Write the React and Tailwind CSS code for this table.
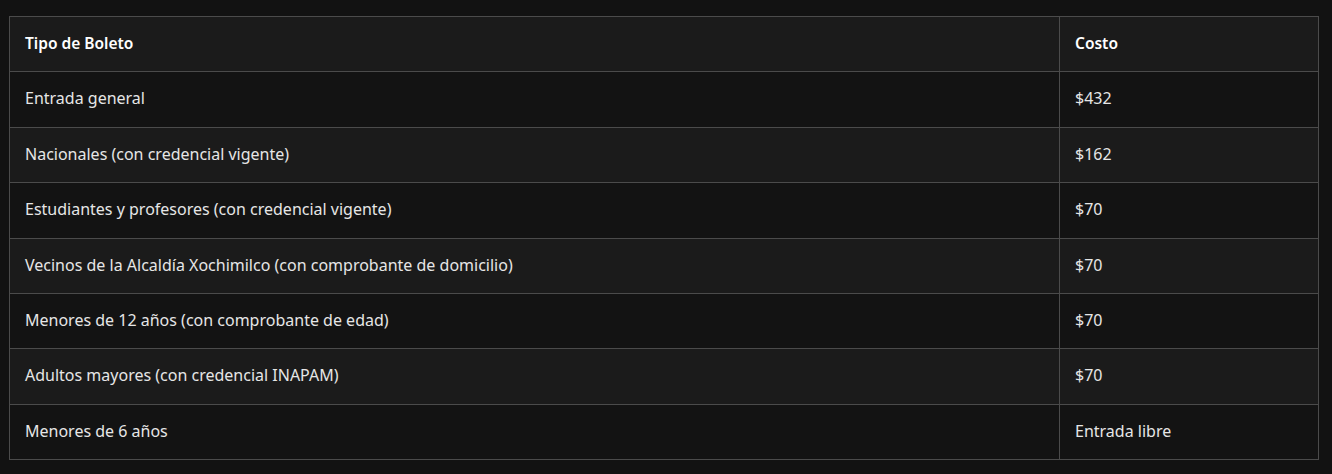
const ROWS = [
  ["Entrada general", "$432"],
  ["Nacionales (con credencial vigente)", "$162"],
  ["Estudiantes y profesores (con credencial vigente)", "$70"],
  ["Vecinos de la Alcaldía Xochimilco (con comprobante de domicilio)", "$70"],
  ["Menores de 12 años (con comprobante de edad)", "$70"],
  ["Adultos mayores (con credencial INAPAM)", "$70"],
  ["Menores de 6 años", "Entrada libre"],
];

export default function App() {
  return (
    <div className="min-h-[474px] bg-[#121212] pl-[9px] pr-[13px] pt-4 pb-4 font-['Noto_Sans',sans-serif]">
      <table className="w-full border-collapse border border-[#4b4b4b] text-[16px] leading-[22.4px]">
        <thead>
          <tr className="bg-[#1b1b1b]">
            <th className="border border-[#4b4b4b] px-[15px] pt-[15px] pb-[17px] text-left text-[15.5px] font-semibold text-white">
              Tipo de Boleto
            </th>
            <th className="w-[259px] border border-[#4b4b4b] px-[15px] pt-[15px] pb-[17px] text-left text-[15.5px] font-semibold text-white">
              Costo
            </th>
          </tr>
        </thead>
        <tbody>
          {ROWS.map(([tipo, costo], i) => (
            <tr key={tipo} className={i % 2 === 0 ? "bg-[#131313]" : "bg-[#1b1b1b]"}>
              <td className="border border-[#4b4b4b] px-[15px] pt-[15px] pb-[17px] text-[#e6e6e6]">{tipo}</td>
              <td className="border border-[#4b4b4b] px-[15px] pt-[15px] pb-[17px] text-[#e6e6e6]">{costo}</td>
            </tr>
          ))}
        </tbody>
      </table>
    </div>
  );
}
